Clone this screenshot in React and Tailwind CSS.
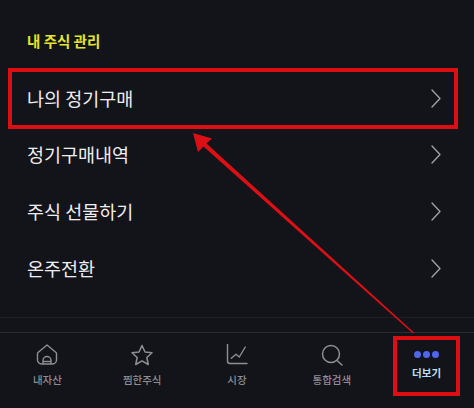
const font = { fontFamily: '"Noto Sans CJK KR", "Noto Sans", sans-serif' }

const rows = ['나의 정기구매', '정기구매내역', '주식 선물하기', '온주전환']

function Chevron() {
  return (
    <svg width="10" height="19" viewBox="0 0 10 19" fill="none" stroke="#a3a3a8" strokeWidth="1.300" strokeLinecap="round" strokeLinejoin="round">
      <path d="M1 1 9 9.500 1 18" />
    </svg>
  )
}

function HomeIcon() {
  return (
    <svg width="22" height="22" viewBox="0 0 22 22" fill="none" stroke="currentColor" strokeWidth="1.400" strokeLinejoin="round">
      <path d="M11 1 20 8.500a1.500 1.500 0 0 1 .5 1.200V16a4 4 0 0 1-4 4h-11a4 4 0 0 1-4-4V9.700A1.500 1.500 0 0 1 2 8.500Z" />
      <path d="M7 20v-3.500a4 4 0 0 1 8 0V20" />
      <path d="M7 17.500h8" />
    </svg>
  )
}

function StarIcon() {
  return (
    <svg width="24" height="22" viewBox="0 0 24 22" fill="none" stroke="currentColor" strokeWidth="1.500" strokeLinejoin="round">
      <path d="M12 1.500 15 8l7 .8-5.200 4.700 1.500 7-6.300-3.600-6.300 3.600 1.500-7L2 8.800 9 8Z" />
    </svg>
  )
}

function ChartIcon() {
  return (
    <svg width="22" height="22" viewBox="0 0 22 22" fill="none" stroke="currentColor" strokeWidth="1.400" strokeLinejoin="round" strokeLinecap="round">
      <path d="M1.500 .5V17a2.500 2.500 0 0 0 2.500 2.500h17" />
      <path d="M5.300 14.300 10 10.300l3.300 2.700 6-10" />
    </svg>
  )
}

function SearchIcon() {
  return (
    <svg width="22" height="22" viewBox="0 0 22 22" fill="none" stroke="currentColor" strokeWidth="1.500" strokeLinecap="round">
      <circle cx="10" cy="10" r="8.500" />
      <path d="M16 16.500 21 21" />
    </svg>
  )
}

const tabs = [
  { label: '내자산', icon: <HomeIcon /> },
  { label: '찜한주식', icon: <StarIcon /> },
  { label: '시장', icon: <ChartIcon /> },
  { label: '통합검색', icon: <SearchIcon /> },
]

export default function App() {
  return (
    <div style={font} className="relative flex h-[408px] w-[474px] flex-col overflow-hidden bg-[#13131a]">
      <div className="flex h-[68px] shrink-0 items-start pl-[27px] pt-[31px] text-[14.500px] leading-5 font-bold text-[#e4e62c]">
        내 주식 관리
      </div>

      <div className="flex flex-col">
        {rows.map((row, i) => (
          <div
            key={row}
            className={
              i === 0
                ? 'z-10 mb-[-3px] ml-2 mr-4 flex h-[61px] items-center border-[4px] border-[#dc0f14] pl-[15px] pr-[13px] text-[18.500px] text-[#eeeef0]'
                : 'ml-2 mr-4 flex h-[57px] items-center pl-[19px] pr-[17px] text-[18.500px] text-[#eeeef0]'
            }
          >
            <span className="flex-1">{row}</span>
            <Chevron />
          </div>
        ))}
      </div>

      <div className="mt-[20px] h-px bg-[#1f1f27]" />
      <div className="mt-[14px] h-px bg-[#2c2c34]" />

      <div className="grid flex-1 grid-cols-5">
        {tabs.map((tab) => (
          <div key={tab.label} className="flex flex-col items-center pt-[11px] text-[#8e8e96]">
            <span className="flex h-[22px] items-center">{tab.icon}</span>
            <span className="mt-[6px] text-[10.500px] leading-4 font-medium">{tab.label}</span>
          </div>
        ))}
        <div className="mt-[3px] flex h-[60px] w-[67px] flex-col items-center justify-self-center border-[4px] border-[#dc0f14] pt-[11px]">
          <div className="flex gap-[2px]">
            <span className="size-[7px] rounded-full bg-[#4f66f0]" />
            <span className="size-[7px] rounded-full bg-[#4f66f0]" />
            <span className="size-[7px] rounded-full bg-[#4f66f0]" />
          </div>
          <span className="mt-[7px] text-[10.500px] leading-4 font-bold text-[#b9e0f5]">더보기</span>
        </div>
      </div>

      <svg className="pointer-events-none absolute inset-0 z-20" width="474" height="408" viewBox="0 0 474 408" fill="#dc0f14">
        <path d="M414 332.500 413 333.500 203.500 146.500 198 152 193 133 212 138.500 206.500 143.500Z" />
      </svg>
    </div>
  )
}
